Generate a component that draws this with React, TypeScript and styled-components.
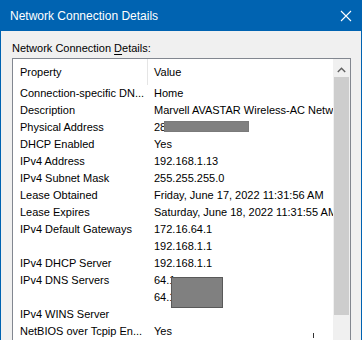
import React from 'react';
import styled, { createGlobalStyle } from 'styled-components';

const GlobalStyle = createGlobalStyle`
  html, body {
    margin: 0;
    padding: 0;
    background: #f0f0f0;
  }
  body {
    font-family: "Liberation Sans", Arial, sans-serif;
    font-size: 11px;
    color: #000;
  }
`;

const Window = styled.div`
  width: 362px;
  height: 340px;
  box-sizing: border-box;
  border-left: 1px solid #0063b1;
  border-right: 1px solid #0063b1;
  background: #f0f0f0;
  overflow: hidden;
  display: flex;
  flex-direction: column;
`;

const TitleBar = styled.div`
  height: 31px;
  flex: none;
  background: #0063b1;
  color: #fff;
  display: flex;
  align-items: center;
  justify-content: space-between;
  padding: 0 9px 0 9px;
  font-size: 12px;
`;

const CloseButton = styled.svg`
  width: 12px;
  height: 12px;
`;

const Body = styled.div`
  flex: 1;
  min-height: 0;
  padding: 9px 10px 0 11px;
  display: flex;
  flex-direction: column;
`;

const Label = styled.div`
  height: 16px;
  line-height: 16px;
  margin-bottom: 2px;
  u {
    text-decoration: underline;
    text-underline-offset: 2px;
  }
`;

const ListBox = styled.div`
  flex: 1;
  border: 1px solid #828790;
  border-bottom: none;
  background: #fff;
  display: grid;
  grid-template-columns: 1fr 17px;
  min-height: 0;
`;

const Table = styled.div`
  display: flex;
  flex-direction: column;
  position: relative;
  overflow: hidden;
`;

const HeaderRow = styled.div`
  height: 26px;
  display: grid;
  grid-template-columns: 134px 1fr;
  align-items: center;
`;

const HeaderCell = styled.div<{ $divider?: boolean }>`
  height: 100%;
  display: flex;
  align-items: center;
  padding-left: ${p => (p.$divider ? '6px' : '7px')};
  border-left: ${p => (p.$divider ? '1px solid #e5e5e5' : 'none')};
  box-sizing: border-box;
`;

const Row = styled.div`
  height: 17px;
  display: grid;
  grid-template-columns: 135px 1fr;
  align-items: center;
`;

const Cell = styled.div<{ $value?: boolean }>`
  padding-left: ${p => (p.$value ? '6px' : '7px')};
  white-space: nowrap;
  overflow: hidden;
  line-height: 17px;
  height: 17px;
`;

/* grey boxes painted over private values in the screenshot */
const Redact = styled.span<{ $dark?: boolean }>`
  position: absolute;
  background: #808080;
  border: 1px solid ${p => (p.$dark ? '#595959' : '#7a7a7a')};
  box-sizing: border-box;
`;

const Caret = styled.span`
  position: absolute;
  left: 300px;
  top: 274px;
  width: 1px;
  height: 5px;
  background: #333;
`;

const ScrollBar = styled.div`
  background: #f0f0f0;
  display: flex;
  flex-direction: column;
`;

const ArrowButton = styled.div`
  height: 18px;
  display: flex;
  align-items: center;
  justify-content: center;
  padding-top: 4px;
  box-sizing: border-box;
`;

const Thumb = styled.div`
  height: 238px;
  margin: 0 1px;
  background: #cdcdcd;
`;

type Entry = { name: string; value: string };

const entries: Entry[] = [
  { name: 'Connection-specific DN...', value: 'Home' },
  { name: 'Description', value: 'Marvell AVASTAR Wireless-AC Network Controller' },
  { name: 'Physical Address', value: '28' },
  { name: 'DHCP Enabled', value: 'Yes' },
  { name: 'IPv4 Address', value: '192.168.1.13' },
  { name: 'IPv4 Subnet Mask', value: '255.255.255.0' },
  { name: 'Lease Obtained', value: 'Friday, June 17, 2022 11:31:56 AM' },
  { name: 'Lease Expires', value: 'Saturday, June 18, 2022 11:31:55 AM' },
  { name: 'IPv4 Default Gateways', value: '172.16.64.1' },
  { name: '', value: '192.168.1.1' },
  { name: 'IPv4 DHCP Server', value: '192.168.1.1' },
  { name: 'IPv4 DNS Servers', value: '64.1' },
  { name: '', value: '64.1' },
  { name: 'IPv4 WINS Server', value: '' },
  { name: 'NetBIOS over Tcpip En...', value: 'Yes' },
];

const redactions = [
  { left: 151, top: 62, width: 85, height: 11, dark: false },
  { left: 158, top: 218, width: 52, height: 31, dark: true },
];

const App: React.FC = () => {
  return (
    <>
      <GlobalStyle />
      <Window>
        <TitleBar>
          <span>Network Connection Details</span>
          <CloseButton viewBox="0 0 12 12">
            <path d="M1 1 L11 11 M11 1 L1 11" stroke="#fff" strokeWidth="1.1" fill="none" />
          </CloseButton>
        </TitleBar>
        <Body>
          <Label>
            Network Connection <u>D</u>etails:
          </Label>
          <ListBox>
            <Table>
              <HeaderRow>
                <HeaderCell>Property</HeaderCell>
                <HeaderCell $divider>Value</HeaderCell>
              </HeaderRow>
              {entries.map((e, i) => (
                <Row key={i}>
                  <Cell>{e.name}</Cell>
                  <Cell $value>{e.value}</Cell>
                </Row>
              ))}
              {redactions.map((r, i) => (
                <Redact
                  key={i}
                  $dark={r.dark}
                  style={{ left: r.left, top: r.top, width: r.width, height: r.height }}
                />
              ))}
              <Caret />
            </Table>
            <ScrollBar>
              <ArrowButton>
                <svg width="9" height="6" viewBox="0 0 9 6">
                  <path d="M0.8 5 L4.5 1.3 L8.2 5" stroke="#606060" strokeWidth="1.4" fill="none" />
                </svg>
              </ArrowButton>
              <Thumb />
            </ScrollBar>
          </ListBox>
        </Body>
      </Window>
    </>
  );
};

export default App;
